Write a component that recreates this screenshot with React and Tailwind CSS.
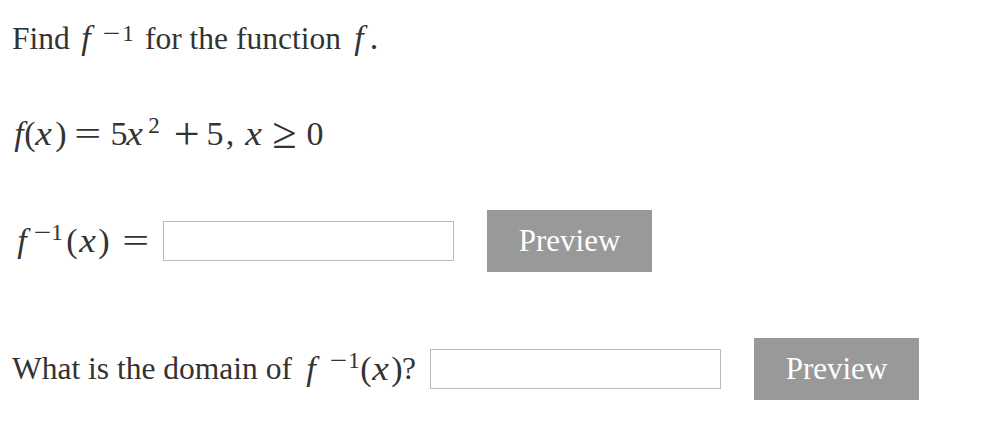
const serif = "font-['Liberation_Serif','Times_New_Roman',serif]";

// one math glyph, centred on the point where the flow reaches it
function G({ at, className = '', children }) {
    return (
        <span className={`inline-flex w-0 justify-center ${at}`}>
            <span className={`text-[34px] ${className}`}>{children}</span>
        </span>
    );
}

function Sup({ at, raise = '-top-[8px]', className = '', children }) {
    return (
        <span className={`relative inline-flex w-0 justify-center ${raise} ${at}`}>
            <span className={`text-[23px] ${className}`}>{children}</span>
        </span>
    );
}

function Field({ className }) {
    return <input className={`h-[40px] w-[291px] shrink-0 border border-[#bbbbbb] bg-white outline-none ${className}`} />;
}

function PreviewButton({ className }) {
    return (
        <button className={`h-[62px] w-[165px] shrink-0 bg-[#999999] text-[31px] text-white ${className}`}>
            Preview
        </button>
    );
}

export default function App() {
    return (
        <div className={`min-h-[438px] w-[984px] bg-white pl-3 pt-[20px] text-[31.5px] leading-[36px] text-[#333333] ${serif}`}>
            <p className="h-[36px] whitespace-nowrap">
                <span className="inline-block w-[57px]">Find</span>
                <G at="ml-[17px]" className="italic">f</G>
                <Sup at="ml-[25px]" className="scale-x-[1.35]">−</Sup>
                <Sup at="ml-[17px]">1</Sup>
                <span className="ml-[17px] inline-block w-[197px]">for the function</span>
                <G at="ml-[17px]" className="italic">f</G>
                <G at="ml-[15px]">.</G>
            </p>

            <p className="mt-[60px] h-[36px] whitespace-nowrap">
                <G at="ml-[7px]" className="italic">f</G>
                <G at="ml-[11px]">(</G>
                <G at="ml-[14px]" className="scale-x-[1.1] italic">x</G>
                <G at="ml-[17px]">)</G>
                <G at="ml-[27px]" className="scale-x-[1.4]">=</G>
                <G at="ml-[31px]">5</G>
                <G at="ml-[16px]" className="scale-x-[1.1] italic">x</G>
                <Sup at="ml-[19px]" raise="-top-[12px]">2</Sup>
                <G at="ml-[33px]" className="scale-[1.35]">+</G>
                <G at="ml-[28px]">5</G>
                <G at="ml-[15px]">,</G>
                <G at="ml-[24px]" className="scale-x-[1.1] italic">x</G>
                <G at="ml-[30px]" className="scale-[1.3]">≥</G>
                <G at="ml-[31px]">0</G>
            </p>

            <div className="mt-[58px] flex h-[62px] items-center whitespace-nowrap">
                <G at="ml-[10px]" className="italic">f</G>
                <Sup at="ml-[20px]" className="scale-x-[1.35]">−</Sup>
                <Sup at="ml-[15px]">1</Sup>
                <G at="ml-[15px]">(</G>
                <G at="ml-[16px]" className="scale-x-[1.1] italic">x</G>
                <G at="ml-[16px]">)</G>
                <G at="ml-[32px]" className="scale-x-[1.4]">=</G>
                <Field className="ml-[27px]" />
                <PreviewButton className="ml-[33px]" />
            </div>

            <div className="mt-[66px] flex h-[62px] items-center whitespace-nowrap">
                <span className="inline-block w-[280px]">What is the domain of</span>
                <G at="ml-[19px]" className="italic">f</G>
                <Sup at="ml-[27px]" className="scale-x-[1.35]">−</Sup>
                <Sup at="ml-[16px]">1</Sup>
                <G at="ml-[12px]">(</G>
                <G at="ml-[15px]" className="scale-x-[1.1] italic">x</G>
                <G at="ml-[16px]">)</G>
                <span className="ml-[5px]">?</span>
                <Field className="ml-[14px]" />
                <PreviewButton className="ml-[33px]" />
            </div>
        </div>
    );
}
